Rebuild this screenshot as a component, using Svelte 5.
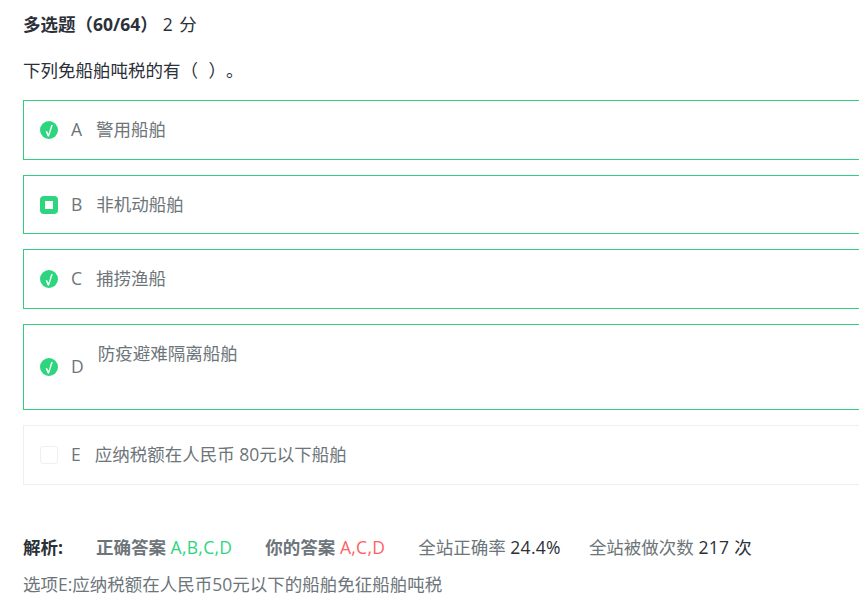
<script lang="ts">
	const options = [
		{ key: 'A', text: '警用船舶', mark: 'check', picked: true },
		{ key: 'B', text: '非机动船舶', mark: 'square', picked: true },
		{ key: 'C', text: '捕捞渔船', mark: 'check', picked: true },
		{ key: 'D', text: '防疫避难隔离船舶', mark: 'check', picked: true, tall: true },
		{ key: 'E', text: '应纳税额在人民币 80元以下船舶', mark: 'none', picked: false }
	];
</script>

<div class="page">
	<div class="head">
		<b>多选题（60/64）</b><span class="score">2 分</span>
	</div>
	<p class="stem">下列免船舶吨税的有（ ）。</p>

	<div class="options">
		{#each options as opt}
			<div class="option" class:picked={opt.picked} class:tall={opt.tall} class:short={opt.key === 'B'}>
				{#if opt.mark === 'check'}
					<span class="mark round">
						<svg width="10" height="13" viewBox="0 0 10 13">
							<path d="M1.6 7.6 L3 7 L4.6 10 L7.2 1 L8.8 1 L5 12.4 L3.8 12.4 Z" fill="#fff" />
						</svg>
					</span>
				{:else if opt.mark === 'square'}
					<span class="mark rect"><i></i></span>
				{:else}
					<span class="mark empty"></span>
				{/if}
				<span class="key">{opt.key}</span>
				<span class="text">{opt.text}</span>
			</div>
		{/each}
	</div>

	<div class="stats">
		<b class="label">解析:</b>
		<span class="stat"><b>正确答案</b> <em class="right">A,B,C,D</em></span>
		<span class="stat"><b>你的答案</b> <em class="wrong">A,C,D</em></span>
		<span class="stat">全站正确率 <em>24.4%</em></span>
		<span class="stat last">全站被做次数 <em>217 次</em></span>
	</div>
	<p class="note">选项E:应纳税额在人民币50元以下的船舶免征船舶吨税</p>
</div>

<style>
	:global(body) {
		margin: 0;
		background: #fff;
		overflow: hidden;
	}

	.page {
		width: 1000px;
		height: 611px;
		padding: 13px 0 0 23px;
		box-sizing: border-box;
		font-family: 'Open Sans', 'Noto Sans CJK SC', sans-serif;
		font-size: 17.5px;
		text-spacing-trim: space-all;
		color: #6d757a;
		overflow: hidden;
	}

	.head {
		line-height: 22px;
		color: #2c3038;
	}

	.score {
		margin-left: 5px;
		word-spacing: 2px;
	}

	.stem {
		margin: 24px 0 0;
		line-height: 22px;
		color: #2c3038;
		word-spacing: 6px;
	}

	.options {
		margin-top: 19px;
		display: flex;
		flex-direction: column;
		gap: 15px;
	}

	.option {
		height: 60px;
		box-sizing: border-box;
		border: 1px solid #eeeff2;
		padding-left: 16px;
		display: flex;
		align-items: center;
	}

	.option.picked {
		border-color: #32ce7c;
	}

	.option.short {
		height: 59px;
	}

	.option.tall {
		height: 86px;
	}

	.option.tall .text {
		align-self: flex-start;
		margin-top: 17px;
		padding-bottom: 0;
	}

	.mark {
		width: 18px;
		height: 18px;
		flex: none;
		display: flex;
		align-items: center;
		justify-content: center;
		box-sizing: border-box;
	}

	.round {
		border-radius: 50%;
		background: #2dd67e;
	}

	.rect {
		border-radius: 4px;
		background: #2dd67e;
	}

	.rect i {
		width: 8px;
		height: 8px;
		background: #fff;
	}

	.empty {
		border: 1px solid #eeeff2;
		border-radius: 3px;
	}

	.key {
		margin: 0 14px 0 13px;
		padding-bottom: 2px;
		flex: none;
	}

	.text {
		line-height: 22px;
		padding-bottom: 2px;
	}

	.stats {
		margin-top: 51px;
		line-height: 22px;
		display: flex;
		gap: 33px;
		white-space: nowrap;
	}

	.stats .label {
		color: #2c3038;
		width: 40px;
	}

	.stat em {
		font-style: normal;
		letter-spacing: 0.3px;
		color: #2c3038;
	}

	.stat em.right {
		color: #2dd67e;
	}

	.stat em.wrong {
		color: #ff5f66;
	}

	.stat.last {
		margin-left: -5px;
	}

	.note {
		margin: 15px 0 0;
		line-height: 22px;
	}
</style>
